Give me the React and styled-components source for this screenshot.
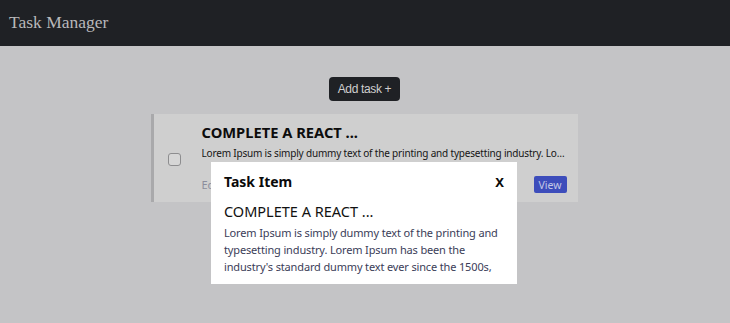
import React from 'react';
import styled, { createGlobalStyle } from 'styled-components';

const GlobalStyle = createGlobalStyle`
	html, body {
		margin: 0;
		padding: 0;
		background: #c4c4c6;
		font-family: 'Noto Sans', 'Open Sans', sans-serif;
	}
	* {
		box-sizing: border-box;
	}
`;

const Header = styled.header`
	height: 46px;
	background: #1f2125;
	display: flex;
	align-items: center;
	padding-left: 9px;
`;

const Brand = styled.h1`
	margin: 0;
	font-family: 'Liberation Serif', serif;
	font-weight: normal;
	font-size: 17.5px;
	color: #b8b8ba;
	padding-bottom: 1px;
`;

const Main = styled.main`
	display: flex;
	flex-direction: column;
	align-items: center;
	padding-top: 31px;
	gap: 13px;
`;

const AddButton = styled.button`
	width: 71px;
	height: 24px;
	border: 0;
	border-radius: 4px;
	background: #1f2125;
	color: #cfcfcf;
	font-family: 'Liberation Sans', Arial, sans-serif;
	font-size: 12px;
	letter-spacing: -0.35px;
	padding: 0;
	margin-left: -1px;
`;

const Card = styled.div`
	width: 427px;
	height: 88px;
	margin-left: -2px;
	background: #cfcfcf;
	border-left: 3px solid #a9a9ab;
	display: flex;
	align-items: stretch;
`;

const CheckCol = styled.div`
	width: 48px;
	display: flex;
	align-items: center;
	padding-left: 14px;
`;

const Check = styled.span`
	width: 13px;
	height: 13px;
	border: 1.5px solid #8d8d8f;
	border-radius: 3px;
	background: #d6d6d6;
	margin-top: 2px;
`;

const Body = styled.div`
	flex: 1;
	min-width: 0;
	padding: 8px 11px 9px 0;
	display: flex;
	flex-direction: column;
`;

const CardTitle = styled.h2`
	margin: 0;
	font-size: 14.7px;
	font-weight: 700;
	color: #0c0c0c;
`;

const CardText = styled.p`
	margin: 4px 0 0;
	font-size: 10px;
	letter-spacing: -0.18px;
	color: #151515;
	white-space: nowrap;
	overflow: hidden;
	text-overflow: ellipsis;
`;

const Actions = styled.div`
	margin-top: auto;
	display: flex;
	justify-content: space-between;
	align-items: center;
`;

const EditLink = styled.span`
	font-size: 11px;
	color: #8b8d9c;
`;

const ViewButton = styled.button`
	border: 0;
	border-radius: 2px;
	background: #3d4dbb;
	color: #c3c8e6;
	font-family: 'Noto Sans', sans-serif;
	font-size: 10.5px;
	width: 33px;
	height: 17px;
	padding: 0;
`;

const Overlay = styled.div`
	position: fixed;
	inset: 0;
	display: flex;
	justify-content: center;
	align-items: flex-start;
	padding-top: 162px;
`;

const Modal = styled.div`
	width: 306px;
	height: 122px;
	margin-left: -2px;
	background: #ffffff;
	padding: 10px 13px 0;
`;

const ModalHead = styled.div`
	display: flex;
	justify-content: space-between;
	align-items: center;
`;

const ModalTitle = styled.h3`
	margin: 0;
	font-size: 14px;
	font-weight: 700;
	color: #0a0a0a;
`;

const Close = styled.span`
	font-size: 13px;
	font-weight: 700;
	color: #0a0a0a;
`;

const ModalTask = styled.h4`
	margin: 10px 0 0;
	font-size: 14.5px;
	font-weight: 400;
	color: #111;
`;

const ModalText = styled.p`
	margin: 4px 0 0;
	font-size: 11px;
	letter-spacing: -0.15px;
	line-height: 16.8px;
	color: #3b3d58;
`;

const desc =
	"Lorem Ipsum is simply dummy text of the printing and typesetting industry. Lorem Ipsum has been the industry's standard dummy text ever since the 1500s,";

export default function App() {
	return (
		<>
			<GlobalStyle />
			<Header>
				<Brand>Task Manager</Brand>
			</Header>
			<Main>
				<AddButton>Add task +</AddButton>
				<Card>
					<CheckCol>
						<Check />
					</CheckCol>
					<Body>
						<CardTitle>COMPLETE A REACT ...</CardTitle>
						<CardText>{desc}</CardText>
						<Actions>
							<EditLink>Edit</EditLink>
							<ViewButton>View</ViewButton>
						</Actions>
					</Body>
				</Card>
			</Main>
			<Overlay>
				<Modal>
					<ModalHead>
						<ModalTitle>Task Item</ModalTitle>
						<Close>X</Close>
					</ModalHead>
					<ModalTask>COMPLETE A REACT ...</ModalTask>
					<ModalText>{desc}</ModalText>
				</Modal>
			</Overlay>
		</>
	);
}
